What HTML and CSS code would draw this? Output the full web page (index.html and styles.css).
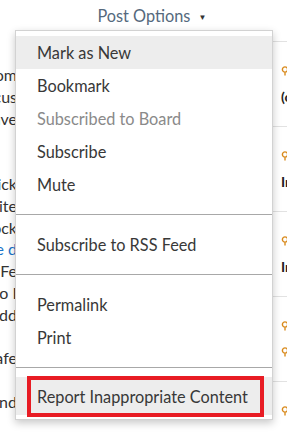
FILE: index.html
```html
<!DOCTYPE html>
<html lang="en">
<head>
    <meta charset="UTF-8">
    <meta name="viewport" content="width=device-width, initial-scale=1.0">
    <title>Post Options</title>
    <link rel="stylesheet" href="styles.css">
</head>
<body>
    <div class="options-bar">
        <button class="options-toggle">Post Options <span class="caret">&#9660;</span></button>
    </div>

    <div class="content">
        <div class="post-body">
            <div class="line">custom</div>
            <div class="line">focus</div>
            <div class="line">have</div>
            <div class="line"></div>
            <div class="line"></div>
            <div class="line">quick</div>
            <div class="line">write</div>
            <div class="line">mock</div>
            <div class="line"><span class="link">the d</span></div>
            <div class="line">RSS Fe</div>
            <div class="line">go I</div>
            <div class="line">add</div>
            <div class="line"></div>
            <div class="line">safe</div>
            <div class="line"></div>
            <div class="line">and</div>
        </div>

        <ul class="side-list">
            <li class="side-item">
                <span class="rank-icon"><svg width="8" height="10" viewBox="0 0 8 10"><circle cx="4" cy="3.5" r="2.6" fill="none" stroke="#d98a1c" stroke-width="1.4"/><path d="M4 6.2 L4 9.4" stroke="#d98a1c" stroke-width="1.4"/></svg></span>
                <span class="side-title">(o</span>
            </li>
            <li class="side-item">
                <span class="rank-icon"><svg width="8" height="10" viewBox="0 0 8 10"><circle cx="4" cy="3.5" r="2.6" fill="none" stroke="#d98a1c" stroke-width="1.4"/><path d="M4 6.2 L4 9.4" stroke="#d98a1c" stroke-width="1.4"/></svg></span>
                <span class="side-title">In</span>
            </li>
            <li class="side-item">
                <span class="rank-icon"><svg width="8" height="10" viewBox="0 0 8 10"><circle cx="4" cy="3.5" r="2.6" fill="none" stroke="#d98a1c" stroke-width="1.4"/><path d="M4 6.2 L4 9.4" stroke="#d98a1c" stroke-width="1.4"/></svg></span>
                <span class="side-title">In</span>
            </li>
            <li class="side-item">
                <span class="rank-icon"><svg width="8" height="10" viewBox="0 0 8 10"><circle cx="4" cy="3.5" r="2.6" fill="none" stroke="#d98a1c" stroke-width="1.4"/><path d="M4 6.2 L4 9.4" stroke="#d98a1c" stroke-width="1.4"/></svg></span>
                <span class="rank-icon second"><svg width="8" height="10" viewBox="0 0 8 10"><circle cx="4" cy="3.5" r="2.6" fill="none" stroke="#d98a1c" stroke-width="1.4"/><path d="M4 6.2 L4 9.4" stroke="#d98a1c" stroke-width="1.4"/></svg></span>
            </li>
            <li class="side-item is-last">
                <span class="rank-icon"><svg width="8" height="10" viewBox="0 0 8 10"><circle cx="4" cy="3.5" r="2.6" fill="none" stroke="#d98a1c" stroke-width="1.4"/><path d="M4 6.2 L4 9.4" stroke="#d98a1c" stroke-width="1.4"/></svg></span>
            </li>
        </ul>
    </div>

    <ul class="menu">
        <li class="menu-item is-hover">Mark as New</li>
        <li class="menu-item">Bookmark</li>
        <li class="menu-item is-disabled">Subscribed to Board</li>
        <li class="menu-item">Subscribe</li>
        <li class="menu-item">Mute</li>
        <li class="menu-divider"></li>
        <li class="menu-item">Subscribe to RSS Feed</li>
        <li class="menu-divider"></li>
        <li class="menu-item">Permalink</li>
        <li class="menu-item">Print</li>
        <li class="menu-divider is-last"></li>
        <li class="menu-item is-flagged">Report Inappropriate Content</li>
    </ul>
</body>
</html>
```

FILE: styles.css
```css
body {
    position: relative;
    width: 287px;
    height: 435px;
    margin: 0;
    overflow: hidden;
    background: #fff;
    font-family: Lato, 'Open Sans', sans-serif;
    color: #333;
}

.options-bar {
    height: 30px;
    display: flex;
    align-items: center;
    justify-content: center;
    padding-left: 17px;
}

.options-toggle {
    border: none;
    background: none;
    padding: 0;
    font-family: inherit;
    font-size: 16.3px;
    color: #55697d;
    cursor: pointer;
}

.caret {
    font-size: 8px;
    color: #333;
    margin-left: 4px;
    vertical-align: 2px;
}

.content {
    display: flex;
    justify-content: space-between;
    padding-top: 34px;
}

.post-body {
    width: 17px;
    font-size: 16px;
    line-height: 21.8px;
}

.line {
    display: flex;
    justify-content: flex-end;
    height: 21.8px;
    overflow: hidden;
    white-space: nowrap;
}

.link {
    color: #1a73c8;
}

.side-list {
    list-style: none;
    margin: -23px 0 0;
    padding: 0;
    width: 14px;
    overflow: hidden;
}

.side-item {
    height: 85px;
    border-top: 1px solid #e2e2e2;
    padding: 18px 0 0 8px;
    box-sizing: border-box;
}

.side-item.is-last {
    height: 40px;
}

.rank-icon {
    display: block;
    height: 14px;
}

.rank-icon.second {
    margin-top: 12px;
}

.side-title {
    display: block;
    margin-top: 14px;
    font-size: 14px;
    font-weight: 700;
    color: #222;
    white-space: nowrap;
}

.menu {
    position: absolute;
    top: 30px;
    left: 15px;
    width: 258px;
    box-sizing: border-box;
    margin: 0;
    padding: 5px 0 4px;
    list-style: none;
    background: #fff;
    border: 1px solid #d2d2d2;
    box-shadow: 0 3px 8px rgba(0,0,0,0.22);
}

.menu-item {
    height: 33px;
    line-height: 34px;
    padding: 0 21px;
    font-size: 16.3px;
    color: #383838;
    white-space: nowrap;
}

.menu-item.is-hover {
    background: #ededed;
}

.menu-item.is-disabled {
    color: #8a8a8a;
}

.menu-divider {
    height: 1px;
    margin: 13px 0;
    background: #a8a8a8;
}

.menu-divider.is-last {
    margin-bottom: 9px;
}

.menu-item.is-flagged {
    position: relative;
    height: 38px;
    line-height: 39px;
    background: #ededed;
}

.menu-item.is-flagged::after {
    content: "";
    position: absolute;
    top: -1px;
    bottom: -2px;
    left: 11px;
    right: 8px;
    border: 4px solid #e81c24;
}
```
